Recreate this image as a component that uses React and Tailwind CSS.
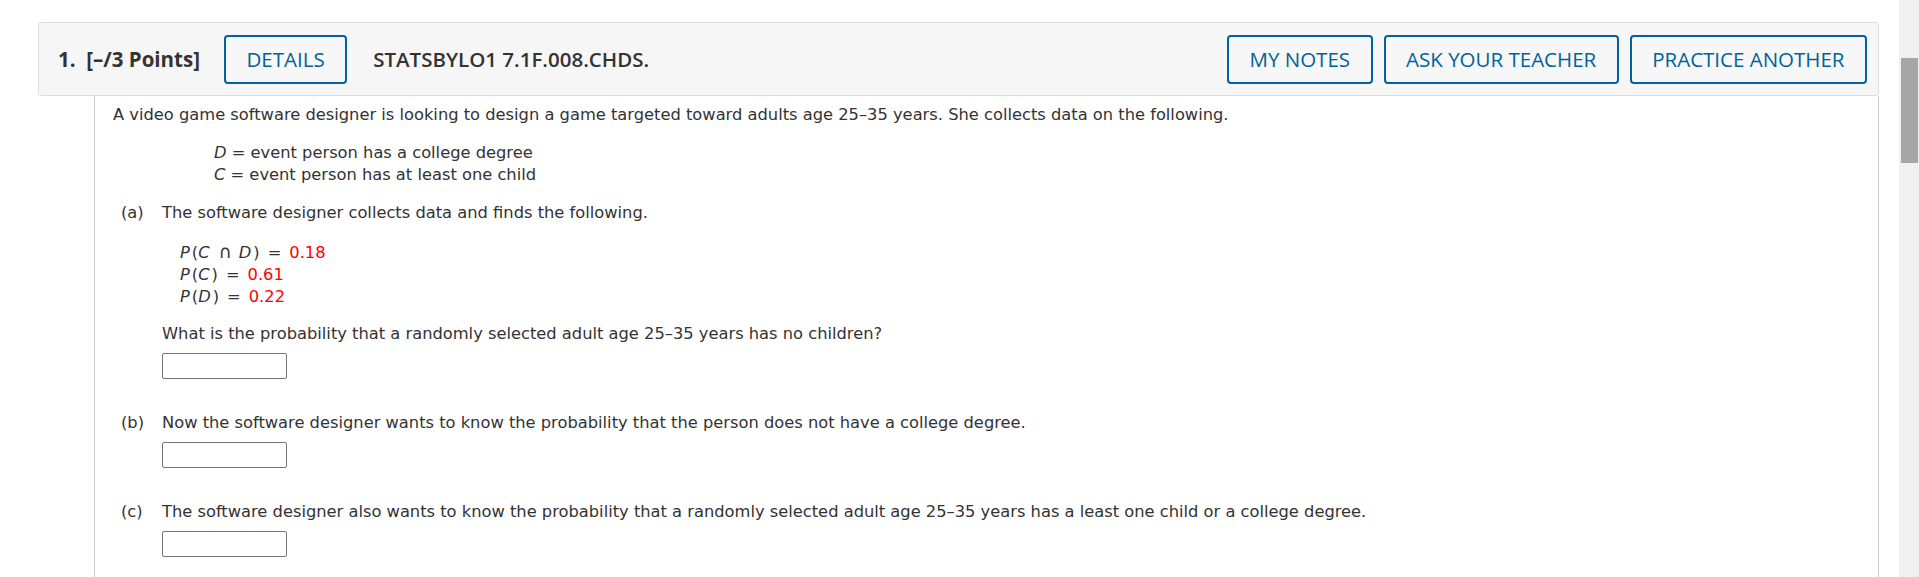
const headerBtn =
  'h-[49px] px-[20.5px] border-2 border-[#00639b] rounded-[4px] text-[#00629b] text-[20.5px] leading-none bg-[#f7f7f7]';

function AnswerBox() {
  return <div className="w-[125px] h-[26px] border border-[#767676] rounded-[2px] bg-white" />;
}

function Part({ label, children }) {
  return (
    <div className="flex">
      <span className="w-[49px] pl-[8px] shrink-0">{label}</span>
      <div>{children}</div>
    </div>
  );
}

function V({ children }) {
  return <i className="pr-[2px]">{children}</i>;
}

function Eq() {
  return <span className="mx-[8px]">=</span>;
}

export default function App() {
  return (
    <div className="flex w-[1919px] h-[577px] overflow-hidden bg-white">
      <div className="flex-1 pt-[22px]">
        <div
          className="ml-[38px] w-[1841px] h-[74px] flex items-center bg-[#f6f6f6] border border-[#dddddd] rounded-[3px] pl-[19px] pr-[11px]"
          style={{ fontFamily: '"Open Sans", sans-serif' }}
        >
          <span className="text-[20.5px] font-bold text-[#333333] whitespace-pre">1.  [–/3 Points]</span>
          <button className={`${headerBtn} ml-[24px]`}>DETAILS</button>
          <span className="ml-[26px] text-[20.5px] font-semibold text-[#333333]">STATSBYLO1 7.1F.008.CHDS.</span>
          <div className="ml-auto flex gap-[11px]">
            <button className={headerBtn}>MY NOTES</button>
            <button className={headerBtn}>ASK YOUR TEACHER</button>
            <button className={headerBtn}>PRACTICE ANOTHER</button>
          </div>
        </div>

        <div
          className="ml-[94px] w-[1785px] h-[481px] border-l border-r border-[#cccccc] pl-[18px] pt-[8px] text-[16.3px] leading-[22px] text-[#333333]"
          style={{ fontFamily: '"DejaVu Sans", Verdana, sans-serif' }}
        >
          <p>
            A video game software designer is looking to design a game targeted toward adults age 25–35 years. She
            collects data on the following.
          </p>

          <div className="mt-[16px] ml-[101px]">
            <p>
              <i>D</i> = event person has a college degree
            </p>
            <p>
              <i>C</i> = event person has at least one child
            </p>
          </div>

          <div className="mt-[16px]">
            <Part label="(a)">
              <p>The software designer collects data and finds the following.</p>
              <div className="mt-[17px] ml-[18px]">
                <p>
                  <V>P</V>(<V>C</V>
                  <span className="mx-[7px] text-[18px]">∩</span>
                  <V>D</V>)<Eq />
                  <span className="text-[#ff0000]">0.18</span>
                </p>
                <p>
                  <V>P</V>(<V>C</V>)<Eq />
                  <span className="text-[#ff0000]">0.61</span>
                </p>
                <p>
                  <V>P</V>(<V>D</V>)<Eq />
                  <span className="text-[#ff0000]">0.22</span>
                </p>
              </div>
              <p className="mt-[15px]">What is the probability that a randomly selected adult age 25–35 years has no children?</p>
              <div className="mt-[8px]">
                <AnswerBox />
              </div>
            </Part>
          </div>

          <div className="mt-[33px]">
            <Part label="(b)">
              <p>Now the software designer wants to know the probability that the person does not have a college degree.</p>
              <div className="mt-[8px]">
                <AnswerBox />
              </div>
            </Part>
          </div>

          <div className="mt-[33px]">
            <Part label="(c)">
              <p>
                The software designer also wants to know the probability that a randomly selected adult age 25–35 years
                has a least one child or a college degree.
              </p>
              <div className="mt-[8px]">
                <AnswerBox />
              </div>
            </Part>
          </div>
        </div>
      </div>

      {/* scrollbar */}
      <div className="w-[20px] h-full bg-[#f0f0f0] pl-[2px] pt-[58px]">
        <div className="w-[17px] h-[105px] bg-[#a6a6a6]" />
      </div>
    </div>
  );
}
